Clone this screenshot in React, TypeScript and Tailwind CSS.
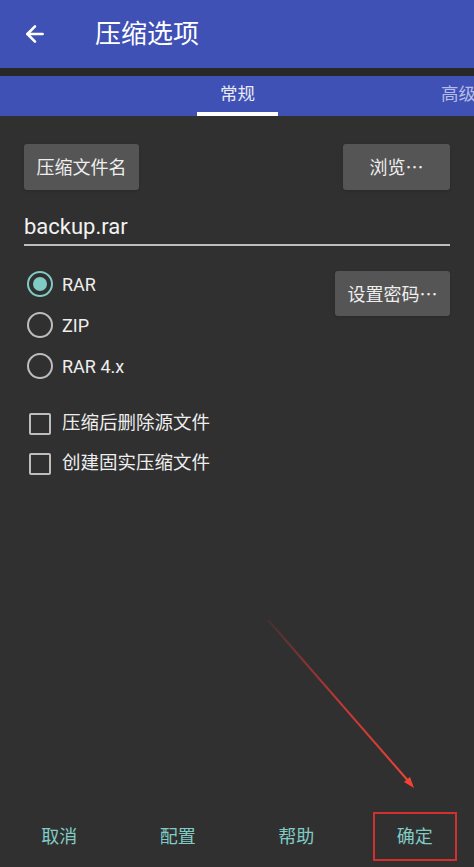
import { ArrowLeft } from 'lucide-react'

const font = "font-['Roboto','Noto_Sans_CJK_SC',sans-serif]"

const formats = [
  { label: 'RAR', checked: true },
  { label: 'ZIP', checked: false },
  { label: 'RAR 4.x', checked: false }
]

const options = ['压缩后删除源文件', '创建固实压缩文件']

const actions = ['取消', '配置', '帮助', '确定']

// CJK ellipsis sits on the middle of the line, like the device font
function Dots() {
  return <span className="font-['Noto_Sans_CJK_SC',sans-serif]">…</span>
}

function Radio({ checked }: { checked: boolean }) {
  return (
    <div
      className={
        checked
          ? 'flex h-[26px] w-[26px] items-center justify-center rounded-full border-2 border-[#80cbc4]'
          : 'flex h-[26px] w-[26px] items-center justify-center rounded-full border-2 border-[#bdbdbd]'
      }
    >
      {checked && <div className="h-[14px] w-[14px] rounded-full bg-[#80cbc4]" />}
    </div>
  )
}

export default function App() {
  return (
    <div className={`relative flex h-[867px] w-[474px] flex-col overflow-hidden bg-[#303030] ${font}`}>
      {/* Toolbar */}
      <div className="flex h-[68px] items-center bg-[#3f51b5] pl-[22px]">
        <ArrowLeft className="h-[26px] w-[26px] text-white" strokeWidth={2.4} />
        <h1 className="ml-[47px] text-[26px] text-white">压缩选项</h1>
      </div>
      <div className="h-2 bg-[#282828]" />

      {/* Tabs */}
      <div className="relative flex h-10 bg-[#3f51b5]">
        <div className="absolute left-[197px] top-0 flex h-10 w-[81px] flex-col items-center justify-between">
          <span className="pt-[7px] text-[17.5px] leading-[22px] text-[#e8eaf6]">常规</span>
          <div className="h-1 w-full bg-white" />
        </div>
        <span className="absolute left-[441px] top-[7px] whitespace-nowrap text-[17.5px] leading-[22px] text-[#b3bbe6]">高级</span>
      </div>

      {/* Body */}
      <div className="flex flex-1 flex-col px-6 pt-7 text-[#e6e6e6]">
        <div className="flex justify-between">
          <button className="h-[46px] w-[115px] rounded-[3px] bg-[#555555] text-[18px] text-[#eeeeee] shadow">压缩文件名</button>
          <button className="h-[46px] w-[107px] rounded-[3px] bg-[#555555] text-[18px] text-[#eeeeee] shadow">
            浏览<Dots />
          </button>
        </div>

        <div className="mt-[22px] border-b-2 border-[#bdbdbd] pb-[2px] text-[22px] leading-[30px] text-[#f2f2f2]">
          backup.rar
        </div>

        <div className="mt-[25px] flex justify-between">
          <div className="flex flex-col gap-[15px] pl-[3px]">
            {formats.map((f) => (
              <div key={f.label} className="flex h-[26px] items-center gap-[9px]">
                <Radio checked={f.checked} />
                <span className="text-[18px] text-[#eeeeee]">{f.label}</span>
              </div>
            ))}
          </div>
          <button className="h-[45px] w-[115px] rounded-[3px] bg-[#555555] text-[18px] text-[#eeeeee] shadow">
            设置密码<Dots />
          </button>
        </div>

        <div className="mt-[34px] flex flex-col gap-[18px] pl-[5px]">
          {options.map((o) => (
            <div key={o} className="flex h-[22px] items-center gap-[11px]">
              <div className="h-[22px] w-[22px] rounded-[2px] border-2 border-[#bdbdbd]" />
              <span className="text-[18.5px] text-[#eeeeee]">{o}</span>
            </div>
          ))}
        </div>
      </div>

      {/* Bottom actions */}
      <div className="grid h-[55px] grid-cols-4 items-start">
        {actions.map((a, i) => (
          <div key={a} className="flex justify-center">
            <button
              className={
                i === 3
                  ? 'h-[49px] w-[84px] border-2 border-[#d32f2f] text-[18px] text-[#80cbc4]'
                  : 'h-[49px] w-[84px] text-[18px] text-[#80cbc4]'
              }
            >
              {a}
            </button>
          </div>
        ))}
      </div>

      {/* annotation arrow */}
      <svg className="pointer-events-none absolute left-0 top-0" width="474" height="867">
        <defs>
          <linearGradient id="fade" x1="268" y1="620" x2="413" y2="787" gradientUnits="userSpaceOnUse">
            <stop offset="0" stopColor="#e53935" stopOpacity="0.1" />
            <stop offset="0.5" stopColor="#e53935" stopOpacity="0.8" />
            <stop offset="1" stopColor="#f44336" />
          </linearGradient>
        </defs>
        <line x1="268" y1="620" x2="410" y2="783" stroke="url(#fade)" strokeWidth="2" />
        <polygon points="414,788 404,782 410,777" fill="#f44336" />
      </svg>
    </div>
  )
}
